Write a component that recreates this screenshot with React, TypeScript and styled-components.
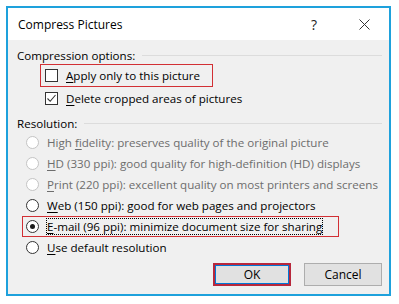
import { createGlobalStyle, styled } from "styled-components";

const GlobalStyle = createGlobalStyle`
  body {
    margin: 0;
    background: #ffffff;
    font-family: "Open Sans", "Noto Sans", sans-serif;
    font-size: 11.6px;
    color: #1b1b1b;
  }
`;

const Page = styled.div`
  padding: 6px 0 0 6px;
`;

const Dialog = styled.div`
  width: 385px;
  height: 290px;
  box-sizing: border-box;
  border: 2px solid #1ea1dc;
  display: flex;
  flex-direction: column;
  background: #f0f0f0;
`;

const TitleBar = styled.header`
  height: 32px;
  background: #ffffff;
  display: flex;
  align-items: center;
  padding-left: 10px;
`;

const Title = styled.h1`
  flex: 1;
  margin: 0;
  font-size: 12px;
  font-weight: 400;
  color: #000;
`;

const TitleButton = styled.button<{ $width: number; $shift?: number }>`
  width: ${(p) => p.$width}px;
  height: 32px;
  border: none;
  background: transparent;
  padding: 0 ${(p) => p.$shift ?? 0}px 0 0;
  display: flex;
  justify-content: center;
  align-items: center;
  font-family: inherit;
  font-size: 14px;
  color: #222;
`;

const Body = styled.div`
  flex: 1;
  display: flex;
  flex-direction: column;
  padding: 7px 7px 8px 9px;
`;

const GroupHeader = styled.div<{ $top?: number }>`
  display: flex;
  align-items: center;
  height: 16px;
  margin-top: ${(p) => p.$top ?? 0}px;
  color: #000;
  &::after {
    content: "";
    flex: 1;
    height: 1px;
    margin-left: 7px;
    background: #dcdcdc;
  }
`;

const OptionList = styled.div<{ $indent: number; $top: number }>`
  display: flex;
  flex-direction: column;
  align-items: flex-start;
  padding-left: ${(p) => p.$indent}px;
  margin-top: ${(p) => p.$top}px;
`;

const OptionRow = styled.label<{ $marked?: boolean; $height: number; $padLeft: number; $padRight: number }>`
  display: inline-flex;
  align-items: center;
  gap: 8px;
  height: ${(p) => p.$height}px;
  box-sizing: border-box;
  padding: 0 ${(p) => p.$padRight}px 0 ${(p) => p.$padLeft}px;
  border: 1px solid ${(p) => (p.$marked ? "#d22f34" : "transparent")};
  white-space: nowrap;
`;

const OptionText = styled.span<{ $disabled?: boolean; $focused?: boolean }>`
  color: ${(p) => (p.$disabled ? "#6d6d6d" : "#000")};
  outline: ${(p) => (p.$focused ? "1px dotted #000" : "none")};
  outline-offset: 0;
  u {
    text-decoration-thickness: 1px;
    text-underline-offset: 2px;
  }
`;

const CheckBox = styled.span`
  width: 13px;
  height: 13px;
  box-sizing: border-box;
  border: 1px solid #333;
  background: #fff;
  display: flex;
  justify-content: center;
  align-items: center;
  flex-shrink: 0;
`;

const Radio = styled.span<{ $disabled?: boolean; $checked?: boolean }>`
  width: 13px;
  height: 13px;
  box-sizing: border-box;
  border-radius: 50%;
  border: 1px solid ${(p) => (p.$disabled ? "#c4c4c4" : "#333")};
  background: #fff;
  display: flex;
  justify-content: center;
  align-items: center;
  flex-shrink: 0;
  &::after {
    content: "";
    width: 5px;
    height: 5px;
    border-radius: 50%;
    background: ${(p) => (p.$checked ? "#1b1b1b" : "transparent")};
  }
`;

const ButtonRow = styled.div`
  margin-top: auto;
  display: flex;
  justify-content: flex-end;
  gap: 13px;
`;

const Button = styled.button<{ $primary?: boolean }>`
  width: 78px;
  height: 23px;
  box-sizing: border-box;
  font-family: inherit;
  font-size: 12px;
  color: #000;
  background: #e1e1e1;
  border: 1px solid ${(p) => (p.$primary ? "#b8283c" : "#adadad")};
  box-shadow: ${(p) => (p.$primary ? "inset 0 0 0 1px #b8283c, inset 0 0 0 2px #0078d7" : "none")};
  padding: 0;
`;

const Check = () => (
  <svg width="11" height="11" viewBox="0 0 11 11">
    <polyline points="1.5,5.5 4.2,8.3 9.5,2" fill="none" stroke="#333" strokeWidth="1.1" />
  </svg>
);

const radios = [
  { pre: "High ", key: "f", post: "idelity: preserves quality of the original picture", disabled: true },
  { pre: "", key: "H", post: "D (330 ppi): good quality for high-definition (HD) displays", disabled: true },
  { pre: "", key: "P", post: "rint (220 ppi): excellent quality on most printers and screens", disabled: true },
  { pre: "", key: "W", post: "eb (150 ppi): good for web pages and projectors" },
  { pre: "", key: "E", post: "-mail (96 ppi): minimize document size for sharing", checked: true },
  { pre: "", key: "U", post: "se default resolution" },
];

export default function App() {
  return (
    <Page>
      <GlobalStyle />
      <Dialog>
        <TitleBar>
          <Title>Compress Pictures</Title>
          <TitleButton $width={46} $shift={4}>?</TitleButton>
          <TitleButton $width={50}>
            <svg width="11" height="11" viewBox="0 0 11 11">
              <path d="M0.5 0.5 L10.5 10.5 M10.5 0.5 L0.5 10.5" stroke="#333" strokeWidth="1" />
            </svg>
          </TitleButton>
        </TitleBar>
        <Body>
          <GroupHeader>Compression options:</GroupHeader>
          <OptionList $indent={23} $top={1}>
            <OptionRow $marked $height={23} $padLeft={4} $padRight={12}>
              <CheckBox />
              <OptionText>
                <u>A</u>pply only to this picture
              </OptionText>
            </OptionRow>
            <OptionRow $height={22} $padLeft={4} $padRight={5}>
              <CheckBox>
                <Check />
              </CheckBox>
              <OptionText>
                <u>D</u>elete cropped areas of pictures
              </OptionText>
            </OptionRow>
          </OptionList>
          <GroupHeader $top={6}>Resolution:</GroupHeader>
          <OptionList $indent={5} $top={1}>
            {radios.map((r) => (
              <OptionRow key={r.key} $marked={r.checked} $height={21} $padLeft={3} $padRight={16}>
                <Radio $disabled={r.disabled} $checked={r.checked} />
                <OptionText $disabled={r.disabled} $focused={r.checked}>
                  {r.pre}
                  <u>{r.key}</u>
                  {r.post}
                </OptionText>
              </OptionRow>
            ))}
          </OptionList>
          <ButtonRow>
            <Button $primary>OK</Button>
            <Button>Cancel</Button>
          </ButtonRow>
        </Body>
      </Dialog>
    </Page>
  );
}
